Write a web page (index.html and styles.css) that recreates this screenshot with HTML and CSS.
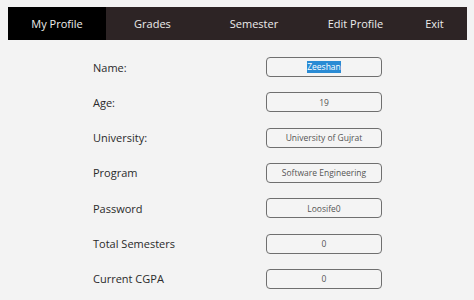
FILE: index.html
```html
<!DOCTYPE html>
<html>
<head>
<meta charset="utf-8">
<link rel="stylesheet" href="styles.css">
</head>
<body>
<nav class="nav">
  <div class="nav-item active">My Profile</div>
  <div class="nav-item">Grades</div>
  <div class="nav-item">Semester</div>
  <div class="nav-item">Edit Profile</div>
  <div class="nav-item">Exit</div>
</nav>
<form class="profile">
  <label class="label">Name:</label>
  <div class="field"><span class="sel">Zeeshan</span></div>
  <label class="label">Age:</label>
  <div class="field">19</div>
  <label class="label">University:</label>
  <div class="field">University of Gujrat</div>
  <label class="label">Program</label>
  <div class="field">Software Engineering</div>
  <label class="label">Password</label>
  <div class="field">Loosife0</div>
  <label class="label">Total Semesters</label>
  <div class="field">0</div>
  <label class="label">Current CGPA</label>
  <div class="field">0</div>
</form>
</body>
</html>
```

FILE: styles.css
```css
html, body {
  background: #f3f3f3;
}
body {
  margin: 7px 7px 0 8px;
  font-family: "Open Sans", "Noto Sans", sans-serif;
}
.nav {
  display: grid;
  grid-template-columns: 98px 93px 110px 93px 1fr;
  height: 33px;
  background: #2d2425;
}
.nav-item {
  display: flex;
  align-items: center;
  justify-content: center;
  color: #ececec;
  font-size: 11px;
}
.nav-item.active {
  background: #000;
}
.profile {
  display: grid;
  grid-template-columns: 173px 116px;
  grid-auto-rows: 20px;
  row-gap: 15.33px;
  margin: 17px 0 0 85px;
}
.label {
  display: flex;
  align-items: center;
  font-size: 11px;
  color: #2a2a2a;
}
.field {
  box-sizing: border-box;
  height: 20px;
  border: 1px solid #6f6f6f;
  border-radius: 4px;
  display: flex;
  align-items: center;
  justify-content: center;
  font-size: 8.5px;
  color: #555;
  background: #f4f4f4;
}
.sel {
  background: #2a8bd4;
  color: #fff;
  padding: 1px 0;
  line-height: 10px;
}
```
